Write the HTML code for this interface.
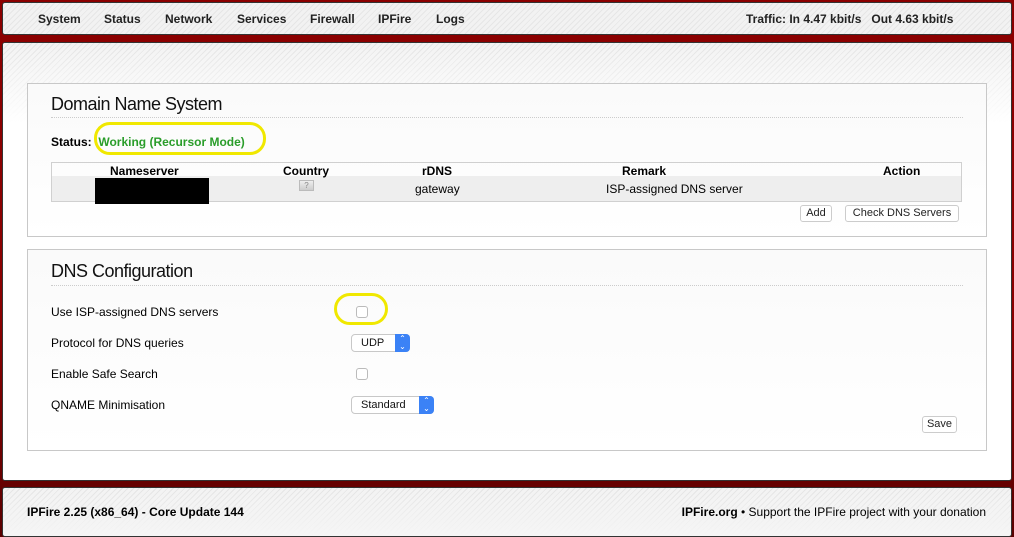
<!DOCTYPE html>
<html><head><meta charset="utf-8"><style>
*{box-sizing:border-box;margin:0;padding:0}
body{width:1014px;height:537px;overflow:hidden;background:linear-gradient(#8b0000,#8b0000 60%,#5a0000);font-family:"Liberation Sans",Arial,sans-serif;font-size:12px;color:#000;position:relative}
#hdr{position:absolute;left:2px;top:2px;width:1010px;height:33px;border-radius:3px;border:1px solid #333;background:repeating-linear-gradient(135deg,#e6e6e6 0 1px,#f2f2f2 1px 4px)}
#hdr span{position:absolute;top:9px;font-weight:bold;font-size:12px;color:#222}
#main{position:absolute;left:2px;top:42px;width:1010px;height:439px;border-radius:3px;border:1px solid #333;background:#fff;overflow:hidden}
#main .top{position:absolute;left:0;top:0;right:0;height:80px;background:linear-gradient(rgba(255,255,255,0),#fff),repeating-linear-gradient(135deg,#e4e4e4 0 1px,#f3f3f3 1px 4px)}
.box{position:absolute;left:24px;width:960px;border:1px solid #c8c8c8;background:linear-gradient(#fafafa,#fff)}
.box h2{position:absolute;left:23px;font-weight:normal;font-size:18px;letter-spacing:-0.5px;color:#111}
.hr{position:absolute;left:23px;right:23px;border-top:1px dotted #ccc}
.t{position:absolute;font-size:12px}
.btn{position:absolute;height:17px;border:1px solid #ccc;border-radius:3px;background:#fff;font-size:11px;text-align:center;line-height:15px;color:#222}
.cb{position:absolute;width:12px;height:12px;border:1px solid #bbb;border-radius:3px;background:#fff}
.sel{position:absolute;height:18px;border:1px solid #c8c8c8;border-radius:4px;background:#fff;font-size:11px;line-height:16px;padding-left:9px;color:#111}
.sel i{position:absolute;right:-1px;top:-1px;width:15px;height:18px;background:#3b82f6;border-radius:0 4px 4px 0;color:#fff;font-style:normal;font-size:8px;text-align:center;line-height:8px;padding-top:1px}
.ring{position:absolute;border:3px solid #f0e800;border-radius:16px}
#ftr{position:absolute;left:2px;top:487px;width:1010px;height:50px;border-radius:3px;border:1px solid #333;background:linear-gradient(rgba(245,245,245,0),#f5f5f5),repeating-linear-gradient(135deg,#e4e4e4 0 1px,#f3f3f3 1px 4px)}
</style></head><body>
<div id="hdr">
<span style="left:35px">System</span><span style="left:101px">Status</span><span style="left:162px">Network</span><span style="left:234px">Services</span><span style="left:307px">Firewall</span><span style="left:375px">IPFire</span><span style="left:433px">Logs</span>
<span style="left:743px">Traffic: In 4.47 kbit/s &nbsp;&nbsp;Out 4.63 kbit/s</span>
</div>
<div id="main"><div class="top"></div>
<div class="box" style="top:40px;height:154px">
<h2 style="top:10px">Domain Name System</h2>
<div class="hr" style="top:33px"></div>
<div class="t" style="left:23px;top:51px;font-weight:bold">Status: <span style="color:#2a9d2a">&nbsp;Working (Recursor Mode)</span></div>
<div style="position:absolute;left:23px;top:78px;width:911px;height:40px;border:1px solid #d0d0d0">
<div style="position:absolute;left:0;right:0;top:13px;height:25px;background:#eee"></div>
<div class="t" style="left:58px;top:1px;font-weight:bold">Nameserver</div>
<div class="t" style="left:231px;top:1px;font-weight:bold">Country</div>
<div class="t" style="left:370px;top:1px;font-weight:bold">rDNS</div>
<div class="t" style="left:570px;top:1px;font-weight:bold">Remark</div>
<div class="t" style="left:831px;top:1px;font-weight:bold">Action</div>
<div style="position:absolute;left:43px;top:15px;width:114px;height:26px;background:#000"></div>
<div style="position:absolute;left:247px;top:17px;width:15px;height:11px;background:linear-gradient(#eee,#ccc);border:1px solid #bbb;font-size:8px;line-height:9px;text-align:center;color:#888">?</div>
<div class="t" style="left:363px;top:19px">gateway</div>
<div class="t" style="left:554px;top:19px">ISP-assigned DNS server</div>
</div>
<div class="btn" style="left:772px;top:121px;width:32px">Add</div>
<div class="btn" style="left:817px;top:121px;width:114px">Check DNS Servers</div>
</div>
<div class="ring" style="left:91px;top:79px;width:172px;height:33px"></div>
<div class="box" style="top:206px;height:202px">
<h2 style="top:11px">DNS Configuration</h2>
<div class="hr" style="top:35px"></div>
<div class="t" style="left:23px;top:55px">Use ISP-assigned DNS servers</div>
<div class="t" style="left:23px;top:86px">Protocol for DNS queries</div>
<div class="t" style="left:23px;top:117px">Enable Safe Search</div>
<div class="t" style="left:23px;top:148px">QNAME Minimisation</div>
<div class="cb" style="left:328px;top:56px"></div>
<div class="sel" style="left:323px;top:84px;width:59px">UDP<i>&#8963;<br>&#8964;</i></div>
<div class="cb" style="left:328px;top:118px"></div>
<div class="sel" style="left:323px;top:146px;width:83px">Standard<i>&#8963;<br>&#8964;</i></div>
<div class="btn" style="left:894px;top:166px;width:35px">Save</div>
</div>
<div class="ring" style="left:331px;top:250px;width:54px;height:32px"></div>
</div>
<div id="ftr">
<span class="t" style="left:24px;top:17px;font-weight:bold">IPFire 2.25 (x86_64) - Core Update 144</span>
<span class="t" style="right:25px;top:17px"><b>IPFire.org</b> • Support the IPFire project with your donation</span>
</div>
</body></html>
